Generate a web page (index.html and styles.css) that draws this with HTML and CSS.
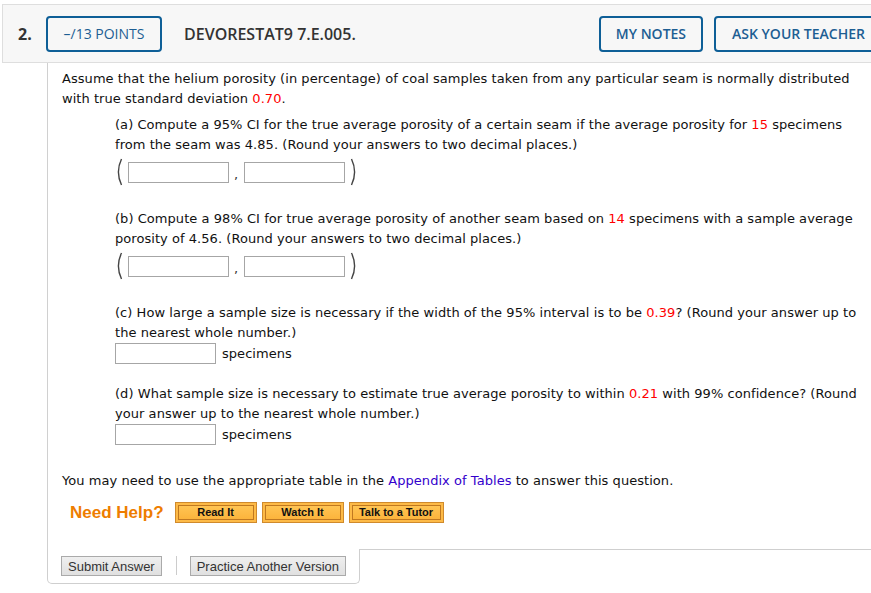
FILE: index.html
```html
<!DOCTYPE html>
<html>
<head>
<meta charset="utf-8">
<link rel="stylesheet" href="styles.css">
</head>
<body>
<div class="page">
  <div class="header">
    <div class="qnum">2.</div>
    <div class="points">–/13 POINTS</div>
    <div class="title">DEVORESTAT9 7.E.005.</div>
    <div class="spacer"></div>
    <div class="hbtn">MY NOTES</div>
    <div class="hbtn ask">ASK YOUR TEACHER</div>
  </div>
  <div class="qbody">
    <p class="intro">Assume that the helium porosity (in percentage) of coal samples taken from any particular seam is normally distributed with true standard deviation <span class="red">0.70</span>.</p>

    <div class="part">
      <p class="ptext">(a) Compute a 95% CI for the true average porosity of a certain seam if the average porosity for <span class="red">15</span> specimens from the seam was 4.85. (Round your answers to two decimal places.)</p>
      <div class="ci">
        <svg class="paren" width="8" height="28" viewBox="0 0 8 28"><path d="M6.5 1 Q0.3 14 6.5 27" fill="none" stroke="#444" stroke-width="1.4"/></svg>
        <span class="box"></span><span class="comma">,</span><span class="box"></span>
        <svg class="paren" width="8" height="28" viewBox="0 0 8 28"><path d="M1.5 1 Q7.7 14 1.5 27" fill="none" stroke="#444" stroke-width="1.4"/></svg>
      </div>
    </div>

    <div class="part">
      <p class="ptext">(b) Compute a 98% CI for true average porosity of another seam based on <span class="red">14</span> specimens with a sample average porosity of 4.56. (Round your answers to two decimal places.)</p>
      <div class="ci">
        <svg class="paren" width="8" height="28" viewBox="0 0 8 28"><path d="M6.5 1 Q0.3 14 6.5 27" fill="none" stroke="#444" stroke-width="1.4"/></svg>
        <span class="box"></span><span class="comma">,</span><span class="box"></span>
        <svg class="paren" width="8" height="28" viewBox="0 0 8 28"><path d="M1.5 1 Q7.7 14 1.5 27" fill="none" stroke="#444" stroke-width="1.4"/></svg>
      </div>
    </div>

    <div class="part">
      <p class="ptext">(c) How large a sample size is necessary if the width of the 95% interval is to be <span class="red">0.39</span>? (Round your answer up to the nearest whole number.)</p>
      <div class="ans"><span class="box"></span><span class="unit">specimens</span></div>
    </div>

    <div class="part">
      <p class="ptext">(d) What sample size is necessary to estimate true average porosity to within <span class="red">0.21</span> with 99% confidence? (Round your answer up to the nearest whole number.)</p>
      <div class="ans"><span class="box"></span><span class="unit">specimens</span></div>
    </div>

    <p class="note">You may need to use the appropriate table in the <span class="link">Appendix of Tables</span> to answer this question.</p>

    <div class="help">
      <span class="needhelp">Need Help?</span>
      <span class="hb w82"><span class="hbi">Read It</span></span>
      <span class="hb w82"><span class="hbi">Watch It</span></span>
      <span class="hb w95"><span class="hbi">Talk to a Tutor</span></span>
    </div>
  </div>
  <div class="footer">
    <div class="tab">
      <span class="fbtn">Submit Answer</span>
      <span class="sep"></span>
      <span class="fbtn">Practice Another Version</span>
    </div>
    <div class="filler"></div>
  </div>
</div>
</body>
</html>
```

FILE: styles.css
```css
html, body {
  margin: 0;
  padding: 0;
  background: #fff;
}
body {
  overflow: hidden;
  width: 871px;
  height: 593px;
}
.page {
  width: 871px;
  overflow: hidden;
  padding-top: 4px;
}
.header {
  margin-left: 2px;
  height: 57px;
  border: 1px solid #dedede;
  border-right: none;
  background: #f7f7f7;
  display: flex;
  align-items: center;
  font-family: "Open Sans", sans-serif;
  color: #333;
  white-space: nowrap;
}
.qnum {
  font-weight: 700;
  font-size: 16px;
  margin-left: 15px;
  width: 28px;
}
.points {
  box-sizing: border-box;
  width: 116px;
  height: 36px;
  border: 2px solid #0e5f97;
  border-radius: 4px;
  color: #1d5e93;
  font-size: 14px;
  display: flex;
  align-items: center;
  justify-content: center;
}
.title {
  margin-left: 22px;
  font-weight: 600;
  font-size: 16px;
  color: #333;
}
.spacer { flex: 1; }
.hbtn {
  box-sizing: border-box;
  height: 36px;
  border: 2px solid #0e5f97;
  border-radius: 4px;
  color: #1d5e93;
  font-size: 14px;
  font-weight: 600;
  display: flex;
  align-items: center;
  padding: 0 15px;
  margin-left: 11px;
}
.hbtn.ask {
  padding: 0 16px;
  margin-right: -12px;
}
.qbody {
  margin-left: 47px;
  border-left: 1px solid #d0d0d0;
  padding: 6px 0 26px 14px;
  font-family: "DejaVu Sans", Verdana, sans-serif;
  font-size: 13px;
  letter-spacing: 0.05px;
  line-height: 20px;
  color: #111;
}
p { margin: 0; }
.red { color: #f00; }
.link { color: #3300cc; }
.part {
  margin-left: 53px;
  margin-top: 6px;
}
.part + .part { margin-top: 20px; }
.ptext { margin: 0; }
.ci {
  height: 34px;
  display: flex;
  align-items: center;
}
.paren { display: block; }
.ci .box { margin: 0 5px; }
.comma {
  width: 5px;
  font-size: 13px;
  line-height: 13px;
  margin-top: 5px;
  color: #333;
}
.box {
  display: inline-block;
  box-sizing: border-box;
  width: 101px;
  height: 21px;
  border: 1px solid #a6a6a6;
  background: #fff;
  vertical-align: middle;
}
.ans {
  height: 21px;
  display: flex;
  align-items: center;
}
.unit { margin-left: 6px; }
.note {
  margin-top: 26px;
}
.help {
  margin-top: 11px;
  margin-left: 8px;
  display: flex;
  align-items: center;
  height: 21px;
  font-family: "Liberation Sans", Arial, sans-serif;
  letter-spacing: 0;
}
.needhelp {
  color: #ee7d00;
  font-weight: 700;
  font-size: 17px;
  margin-right: 11px;
}
.hb {
  box-sizing: border-box;
  height: 21px;
  border: 1px solid #d08a2c;
  background: #fdba47;
  padding: 2px;
  margin-right: 5px;
  display: flex;
}
.w82 { width: 82px; }
.w95 { width: 95px; }
.hbi {
  flex: 1;
  border: 1px solid #c07820;
  background: linear-gradient(#ffc453, #fcb43c);
  font-size: 11px;
  font-weight: 700;
  color: #111;
  display: flex;
  align-items: center;
  justify-content: center;
  line-height: 1;
}
.footer {
  display: flex;
  margin-left: 47px;
}
.tab {
  box-sizing: border-box;
  height: 35px;
  border: 1px solid #cfcfcf;
  border-top: none;
  border-radius: 0 0 5px 5px;
  padding: 7px 13px 0 13px;
  display: flex;
  align-items: flex-start;
}
.filler {
  flex: 1;
  border-top: 1px solid #cfcfcf;
}
.fbtn {
  box-sizing: border-box;
  height: 20px;
  border: 1px solid #aaa;
  background: linear-gradient(#efefef, #e0e0e0);
  font-family: "Liberation Sans", Arial, sans-serif;
  font-size: 13px;
  color: #333;
  padding: 0 6px;
  display: flex;
  align-items: center;
}
.sep {
  width: 1px;
  height: 19px;
  background: #ccc;
  margin: 0 13px 0 14px;
}
```
